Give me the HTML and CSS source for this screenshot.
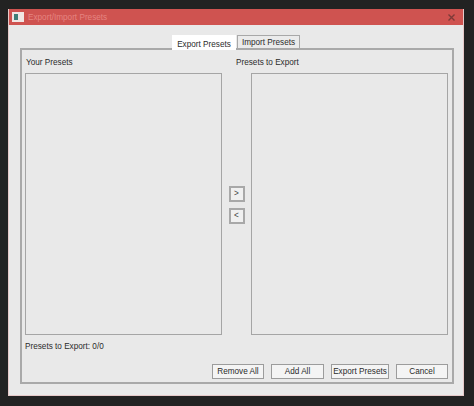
FILE: index.html
```html
<!DOCTYPE html>
<html lang="en">

<head>
	<meta charset="UTF-8">
	<meta name="viewport" content="width=device-width, initial-scale=1.0">
	<title>Export/Import Presets</title>
	<link rel="stylesheet" href="styles.css">
</head>

<body>
	<div class="window">
		<div class="titlebar">
			<svg class="app-icon" width="12" height="10" viewBox="0 0 12 10">
				<rect width="12" height="10" fill="#f1e6e4"/>
				<rect x="2" y="2" width="4" height="6" fill="#3f7f78"/>
			</svg>
			<span class="title">Export/Import Presets</span>
			<svg class="close" width="7" height="7" viewBox="0 0 7 7">
				<path d="M0.5 0.5L6.5 6.5M6.5 0.5L0.5 6.5" stroke="#7d3a38" stroke-width="1.4"/>
			</svg>
		</div>

		<div class="content">
			<div class="tabs">
				<div class="tab active">Export Presets</div>
				<div class="tab">Import Presets</div>
			</div>

			<div class="panel">
				<div class="columns">
					<div class="column">
						<p class="label">Your Presets</p>
						<div class="list"></div>
					</div>
					<div class="arrows">
						<button type="button" class="arrow">&gt;</button>
						<button type="button" class="arrow">&lt;</button>
					</div>
					<div class="column">
						<p class="label outdent">Presets to Export</p>
						<div class="list"></div>
					</div>
				</div>

				<p class="count">Presets to Export: 0/0</p>

				<div class="buttons">
					<button type="button" class="butn">Remove All</button>
					<button type="button" class="butn add">Add All</button>
					<button type="button" class="butn wide">Export Presets</button>
					<button type="button" class="butn">Cancel</button>
				</div>
			</div>
		</div>
	</div>
</body>

</html>
```

FILE: styles.css
```css
body {
	margin: 0;
	height: 406px;
	padding: 9px 10px 10px 8px;
	box-sizing: border-box;
	background-color: #222222;
	font-family: "Liberation Sans", Arial, sans-serif;
	font-size: 8.2px;
	color: #2b2b2b;
	overflow: hidden;
}

p {
	margin: 0;
}

.window {
	height: 100%;
	display: flex;
	flex-direction: column;
	background: #e9e9e9;
	border: 1px solid #e6c9c9;
	border-top: 0;
	box-sizing: border-box;
}

.titlebar {
	height: 16px;
	flex: none;
	display: flex;
	align-items: center;
	padding: 0 8px 0 3px;
	background: #cf5350;
}

.app-icon {
	margin-right: 4px;
}

.title {
	flex: 1;
	color: #e58480;
}

.content {
	flex: 1;
	display: flex;
	flex-direction: column;
	padding: 10px 9px 11px 11px;
}

.tabs {
	height: 13px;
	display: flex;
	justify-content: center;
	align-items: flex-start;
	gap: 1px;
	padding-right: 2px;
}

.tab {
	width: 63px;
	height: 14px;
	line-height: 14px;
	text-align: center;
	white-space: nowrap;
	background: #ebebeb;
	border: 1px solid #a8a8a8;
	border-bottom: 0;
	box-sizing: border-box;
}

.tab.active {
	width: 64px;
	height: 15px;
	line-height: 17px;
	background: #ffffff;
	border-color: #ffffff;
	position: relative;
	z-index: 1;
}

.panel {
	flex: 1;
	display: flex;
	flex-direction: column;
	border: 2px solid #a9a9a9;
	box-sizing: border-box;
	padding: 8px 4px 3px 3px;
}

.columns {
	flex: 1;
	display: flex;
}

.column {
	width: 197px;
	display: flex;
	flex-direction: column;
}

.label {
	height: 15px;
	line-height: 9px;
	padding-left: 1px;
	white-space: nowrap;
}

.label.outdent {
	margin-left: -16px;
}

.list {
	flex: 1;
	border: 1px solid #a5a5a5;
}

.arrows {
	flex: 1;
	display: flex;
	flex-direction: column;
	align-items: center;
	justify-content: center;
	gap: 6px;
	padding-top: 17px;
}

.arrow {
	width: 16px;
	height: 16px;
	padding: 0;
	font: inherit;
	line-height: 12px;
	color: #444444;
	background: #f0f0f0;
	border: 2px solid #a8a8a8;
}

.count {
	height: 14px;
	margin-top: 6px;
	line-height: 12px;
}

.buttons {
	display: flex;
	justify-content: flex-end;
	gap: 7px;
	margin-top: 9px;
}

.butn {
	width: 52px;
	height: 15px;
	padding: 0;
	font: inherit;
	line-height: 12px;
	color: #2b2b2b;
	background: #f4f4f4;
	border: 1px solid #9c9c9c;
	white-space: nowrap;
}

.butn.add {
	width: 53px;
}

.butn.wide {
	width: 58px;
}
```
